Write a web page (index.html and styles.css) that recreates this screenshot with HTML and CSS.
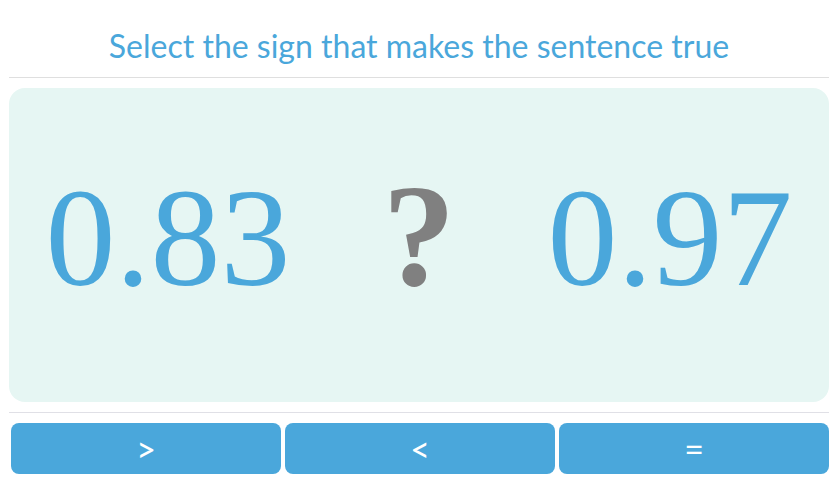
FILE: index.html
```html
<!DOCTYPE html>
<html lang="en">
<head>
    <meta charset="UTF-8">
    <meta name="viewport" content="width=device-width, initial-scale=1.0">
    <title>Compare Decimals</title>
    <link rel="stylesheet" href="styles.css">
</head>
<body>
    <div id="quiz">
        <div class="prompt">
            <h1>Select the sign that makes the sentence true</h1>
        </div>

        <div class="board">
            <span class="number">0.83</span>
            <span class="sign">?</span>
            <span class="number">0.97</span>
        </div>

        <div class="answers">
            <button class="answer">&gt;</button>
            <button class="answer">&lt;</button>
            <button class="answer">=</button>
        </div>
    </div>
</body>
</html>
```

FILE: styles.css
```css
body {
    margin: 0;
    font-family: Lato, "Open Sans", sans-serif;
    background: white;
}

#quiz {
    width: 820px;
    margin-left: 9px;
    box-sizing: border-box;
}

.prompt {
    height: 77px;
    border-bottom: 1px solid #dfdfdf;
    display: flex;
    align-items: center;
    justify-content: center;
}

.prompt h1 {
    margin: 0;
    padding-top: 13px;
    font-size: 32px;
    font-weight: normal;
    color: #4aa7db;
}

.board {
    margin-top: 10px;
    height: 314px;
    box-sizing: border-box;
    padding-top: 75px;
    background: #e6f6f3;
    border-radius: 16px;
    display: flex;
    align-items: baseline;
    justify-content: center;
    gap: 92px;
}

.number, .sign {
    font-family: "Liberation Serif", serif;
    font-size: 140px;
    line-height: 1;
}

.number {
    color: #4aa7db;
}

.sign {
    color: #808080;
    font-weight: bold;
    font-size: 146px;
}

.answers {
    margin-top: 10px;
    border-top: 1px solid #e0e0e6;
    padding-top: 10px;
    padding-left: 2px;
    display: flex;
    gap: 4px;
}

.answer {
    flex: 1;
    height: 51px;
    background: #4aa7db;
    color: white;
    border: none;
    border-radius: 8px;
    font-family: Lato, "Open Sans", sans-serif;
    font-size: 34px;
    line-height: 1;
    padding: 0;
}
```
